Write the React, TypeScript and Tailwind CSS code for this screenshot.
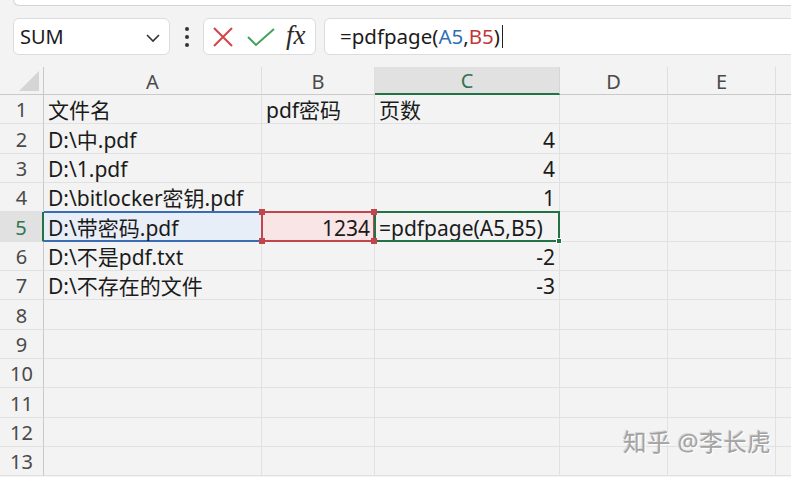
import React from "react";

const FONT = { fontFamily: '"Noto Sans", "Noto Sans CJK SC", sans-serif' };

const colW = ["w-[218px]", "w-[113px]", "w-[185px]", "w-[108px]", "w-[108px]", "w-[60px]"];
const colNames = ["A", "B", "C", "D", "E", ""];
const rowH = ["h-[29px]", "h-[30px]", "h-[29px]", "h-[29px]", "h-[30px]", "h-[29px]", "h-[29px]", "h-[30px]", "h-[29px]", "h-[29px]", "h-[30px]", "h-[29px]", "h-[29px]"];

type Cell = { t: string; right?: boolean };
const data: Cell[][] = [
  [{ t: "文件名" }, { t: "pdf密码" }, { t: "页数" }],
  [{ t: "D:\\中.pdf" }, { t: "" }, { t: "4", right: true }],
  [{ t: "D:\\1.pdf" }, { t: "" }, { t: "4", right: true }],
  [{ t: "D:\\bitlocker密钥.pdf" }, { t: "" }, { t: "1", right: true }],
  [{ t: "D:\\带密码.pdf" }, { t: "1234", right: true }, { t: "=pdfpage(A5,B5)" }],
  [{ t: "D:\\不是pdf.txt" }, { t: "" }, { t: "-2", right: true }],
  [{ t: "D:\\不存在的文件" }, { t: "" }, { t: "-3", right: true }],
];

function Handle({ pos, color }: { pos: string; color: string }) {
  return <div className={`absolute w-[6px] h-[6px] z-30 ${pos} ${color}`} />;
}

export default function App() {
  return (
    <div
      className="w-[791px] h-[477px] overflow-hidden bg-[#f3f3f3] flex flex-col relative text-[#1b1b1b]"
      style={FONT}
    >
      {/* top ribbon edge */}
      <div className="h-[6px] pl-[13px] flex">
        <div className="flex-1 h-[6px] bg-white border-b border-l border-[#d4d4d4] rounded-bl-[8px]" />
      </div>

      {/* formula toolbar */}
      <div className="mt-[12px] h-[37px] flex items-stretch">
        <div className="ml-[13px] w-[157px] shrink-0 bg-white border border-[#dcdcdc] rounded-[6px] flex items-center pl-[6px] pr-[8px]">
          <span className="text-[20px] text-[#1b1b1b] flex-1 leading-none">SUM</span>
          <svg width="16" height="10" viewBox="0 0 16 10" className="mt-[2px]">
            <path d="M2 2 L8 8 L14 2" fill="none" stroke="#333" strokeWidth="1.6" />
          </svg>
        </div>
        <div className="w-[33px] shrink-0 flex flex-col items-center justify-center gap-[4px]">
          <div className="w-[4px] h-[4px] rounded-full bg-[#333]" />
          <div className="w-[4px] h-[4px] rounded-full bg-[#333]" />
          <div className="w-[4px] h-[4px] rounded-full bg-[#333]" />
        </div>
        <div className="w-[113px] shrink-0 bg-white border border-[#dcdcdc] rounded-[6px] flex items-center pl-[8px]">
          <svg width="22" height="22" viewBox="0 0 22 22">
            <path d="M2 2 L20 20 M20 2 L2 20" stroke="#d6434b" strokeWidth="2" fill="none" />
          </svg>
          <svg width="28" height="20" viewBox="0 0 28 20" className="ml-[13px]">
            <path d="M1 10 L9 18 L27 2" stroke="#44a05a" strokeWidth="2" fill="none" />
          </svg>
          <span
            className="ml-[11px] text-[27px] italic leading-none text-[#2a2a2a] -mt-[2px]"
            style={{ fontFamily: '"Liberation Serif", serif' }}
          >
            fx
          </span>
        </div>
        <div className="ml-[8px] flex-1 -mr-[10px] bg-white border border-[#dcdcdc] rounded-[6px] flex items-center pl-[15px]">
          <span className="text-[20.5px] leading-none">
            =pdfpage(<span className="text-[#2f6fb3]">A5</span>,<span className="text-[#c0383b]">B5</span>)
          </span>
          <div className="w-[1px] h-[23px] bg-[#222] ml-[2px]" />
        </div>
      </div>

      {/* sheet */}
      <div className="mt-[12px] flex flex-col">
        {/* column header */}
        <div className="h-[28px] flex">
          <div className="w-[44px] shrink-0 h-full border-r border-b border-[#c9c9c9] relative">
            <svg width="20" height="20" viewBox="0 0 20 20" className="absolute right-[4px] bottom-[3px]">
              <path d="M20 0 L20 20 L0 20 Z" fill="#d5d5d5" />
            </svg>
          </div>
          {colNames.map((c, i) => (
            <div
              key={i}
              className={`${colW[i]} shrink-0 h-full flex items-center justify-center text-[20px] ${
                c === "C"
                  ? "bg-[#e1e1e1] border-b-2 border-b-[#217346] text-[#2f7550] border-r border-r-[#d6d6d6]"
                  : "border-r border-r-[#dedede] border-b border-b-[#c9c9c9] text-[#4a4a4a]"
              }`}
            >
              <span className="leading-none pt-[2px]">{c}</span>
            </div>
          ))}
        </div>
        {/* rows */}
        {rowH.map((h, r) => {
          const sel = r === 4;
          const row = data[r] || [];
          return (
            <div key={r} className={`${h} flex`}>
              <div
                className={`w-[44px] shrink-0 h-full flex items-center justify-center text-[20px] border-b border-[#e1e1e1] ${
                  sel
                    ? "bg-[#e1e1e1] border-r-2 border-r-[#217346] text-[#2f7550]"
                    : "border-r border-r-[#c9c9c9] text-[#4a4a4a]"
                }`}
              >
                <span className="leading-none pt-[2px]">{r + 1}</span>
              </div>
              {colW.map((w, c) => {
                const cell = row[c];
                let extra = "";
                let overlay: React.ReactNode = null;
                if (sel && c === 0) {
                  extra = "bg-[#e8eef7]";
                  overlay = (
                    <div className="absolute -top-[1px] -bottom-[1px] left-0 -right-[1px] border-t-2 border-b-2 border-[#3a6db3] z-10" />
                  );
                }
                if (sel && c === 1) {
                  extra = "bg-[#f9e5e5]";
                  overlay = (
                    <>
                      <div className="absolute -top-[1px] -bottom-[1px] -left-[1px] -right-[1px] border-2 border-[#c0464b] z-10" />
                      <Handle pos="-top-[3px] -left-[3px]" color="bg-[#c0464b]" />
                      <Handle pos="-top-[3px] -right-[3px]" color="bg-[#c0464b]" />
                      <Handle pos="-bottom-[3px] -left-[3px]" color="bg-[#c0464b]" />
                      <Handle pos="-bottom-[3px] -right-[3px]" color="bg-[#c0464b]" />
                    </>
                  );
                }
                if (sel && c === 2) {
                  overlay = (
                    <>
                      <div className="absolute -top-[1px] -bottom-[1px] -left-[1px] -right-[1px] border-2 border-[#217346] z-20" />
                      <div className="absolute -bottom-[3px] -right-[3px] w-[6px] h-[6px] bg-[#217346] border border-white z-30" />
                    </>
                  );
                }
                return (
                  <div
                    key={c}
                    className={`${w} shrink-0 h-full relative border-r border-b border-[#e1e1e1] flex items-center px-[4px] ${
                      cell?.right ? "justify-end pr-[4px]" : ""
                    } ${extra}`}
                  >
                    {cell && cell.t && (
                      <span className="text-[21px] leading-none pt-[3px] whitespace-nowrap relative z-20">{cell.t}</span>
                    )}
                    {overlay}
                  </div>
                );
              })}
            </div>
          );
        })}
      </div>

      {/* watermark */}
      <div className="absolute left-[623px] top-[425px] text-[23.5px] text-[#a3a3a3] [text-shadow:1px_1px_0_#ffffff,-1px_-1px_0_#d8d8d8] whitespace-nowrap tracking-[0.5px]">
        知乎 @李长虎
      </div>
    </div>
  );
}
